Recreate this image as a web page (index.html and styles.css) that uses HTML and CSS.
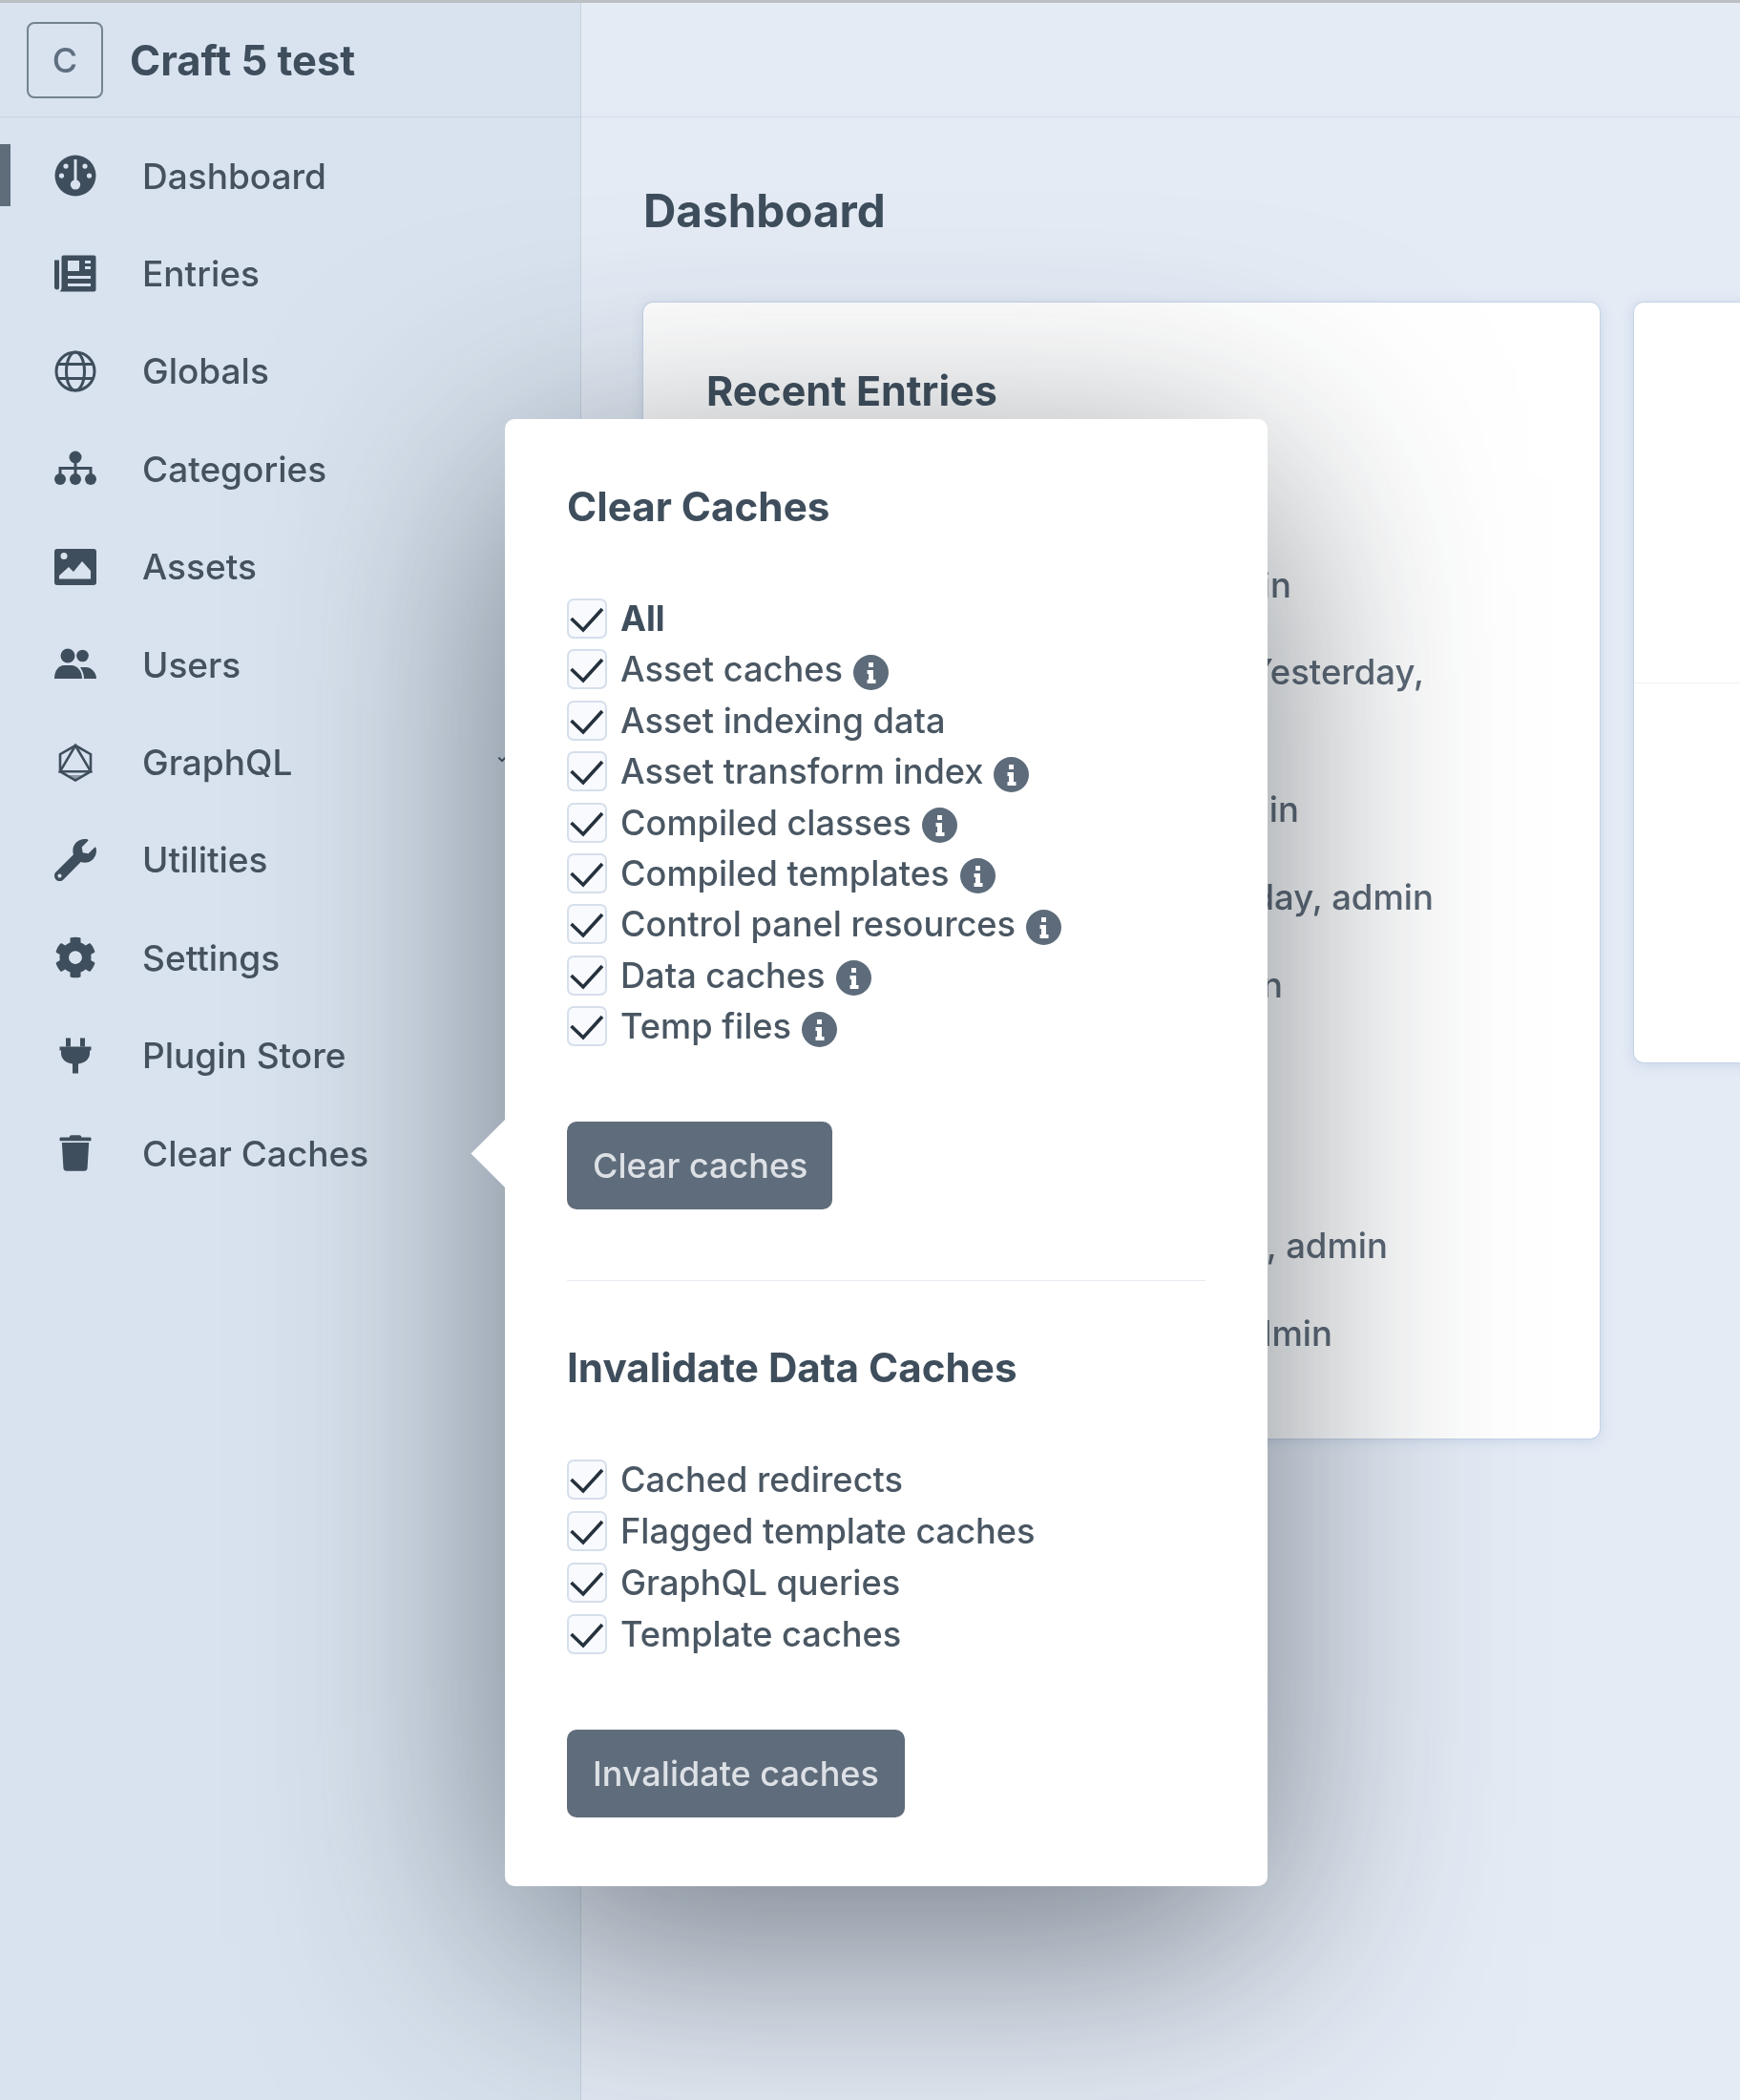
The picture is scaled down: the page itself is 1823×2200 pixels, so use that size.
FILE: index.html
```html
<!DOCTYPE html>
<html lang="en">
<head>
<meta charset="utf-8">
<title>Dashboard - Craft 5 test</title>
<link rel="stylesheet" href="styles.css">
</head>
<body>
<div class="app">
  <aside class="sidebar">
    <div class="site">
      <span class="logo">C</span>
      <span class="site-name">Craft 5 test</span>
    </div>
    <nav class="nav">
      <a class="nav-item active"><svg class="icon" viewBox="0 0 44 44"><path fill-rule="evenodd" d="M22 .5a21.5 21.5 0 1 0 0 43a21.5 21.5 0 1 0 0-43zM20.5 5h3v21.4a5.2 5.2 0 1 1-3 0zM12 9.5a2.6 2.6 0 1 1 0 5.2a2.6 2.6 0 1 1 0-5.2zM32 9.5a2.6 2.6 0 1 1 0 5.2a2.6 2.6 0 1 1 0-5.2zM7.5 19.5a2.6 2.6 0 1 1 0 5.2a2.6 2.6 0 1 1 0-5.2zM36.5 19.5a2.6 2.6 0 1 1 0 5.2a2.6 2.6 0 1 1 0-5.2z"/></svg><span>Dashboard</span></a>
      <a class="nav-item"><svg class="icon" viewBox="0 0 44 44"><path fill-rule="evenodd" d="M9.5 2.5h32a2 2 0 0 1 2 2v34a2 2 0 0 1-2 2H5.5a5 5 0 0 0 2-4V4.500a2 2 0 0 1 2-2zM14 8v11h12V8zM32 8v3h6V8zM32 14v3h6v-3zM14 24v3h24v-3zM14 32v3h24v-3z"/><path d="M0 7.500h5v29a2 2 0 0 1-2 2a3 3 0 0 1-3-3z"/></svg><span>Entries</span></a>
      <a class="nav-item"><svg class="icon stroke" viewBox="0 0 44 44"><circle cx="22" cy="22" r="20"/><ellipse cx="22" cy="22" rx="9.500" ry="20"/><path d="M4 14.500h36M4 29.500h36"/></svg><span>Globals</span></a>
      <a class="nav-item"><svg class="icon" viewBox="0 0 44 44"><circle cx="22" cy="10" r="6.500"/><circle cx="6" cy="33" r="6"/><circle cx="22" cy="33" r="6"/><circle cx="38" cy="33" r="6"/><path d="M20.500 12h3v8h16v9h-3v-6h-13v6h-3v-6h-13v6h-3v-9h16z"/></svg><span>Categories</span></a>
      <a class="nav-item"><svg class="icon" viewBox="0 0 44 44"><path fill-rule="evenodd" d="M3 3h38a3 3 0 0 1 3 3v32a3 3 0 0 1-3 3H3a3 3 0 0 1-3-3V6a3 3 0 0 1 3-3zM10 7a3.500 3.500 0 1 0 0 7a3.500 3.500 0 1 0 0-7zM5 34.500h33V26l-9-10-9 11-5-5-10 9z"/></svg><span>Assets</span></a>
      <a class="nav-item"><svg class="icon" viewBox="0 0 44 44"><circle cx="14" cy="13" r="7.500"/><circle cx="29.500" cy="13" r="6.300"/><path d="M0 37c0-9 5-14 10-14h8c5 0 11 5 11 14z"/><path d="M31 37c0-5-2-9-4-12h6c6 0 11 6 11 12z"/></svg><span>Users</span></a>
      <a class="nav-item"><svg class="icon gql" viewBox="0 0 44 44"><path d="M22 4l16 9.200v18L22 40.500 6 31.200v-18z"/><path d="M22 4l16 27.200H6z"/><path class="gql-base" d="M14 35h16l-8 5z"/></svg><span>GraphQL</span><svg class="chevron" viewBox="0 0 8 10"><path d="M1 3l3 3 3-3"/></svg></a>
      <a class="nav-item"><svg class="icon" viewBox="0 0 512 512"><path d="M507.730 109.100c-2.240-9.030-13.540-12.090-20.120-5.510l-74.360 74.360-67.880-11.310-11.310-67.880 74.360-74.360c6.620-6.620 3.430-17.900-5.660-20.160-47.380-11.740-99.550.91-136.580 37.930-39.640 39.640-50.550 97.100-34.050 147.200L18.740 402.760c-24.990 24.990-24.990 65.510 0 90.500 24.990 24.990 65.510 24.990 90.500 0l213.210-213.210c50.120 16.710 107.470 5.680 147.370-34.220 37.070-37.070 49.700-89.320 37.910-136.730zM64 472c-13.250 0-24-10.750-24-24 0-13.260 10.750-24 24-24s24 10.740 24 24c0 13.250-10.750 24-24 24z"/></svg><span>Utilities</span></a>
      <a class="nav-item"><svg class="icon" viewBox="0 0 512 512"><path d="M487.400 315.700l-42.600-24.600c4.300-23.200 4.300-47 0-70.200l42.600-24.600c4.900-2.800 7.100-8.600 5.500-14-11.100-35.600-30-67.800-54.700-94.600-3.800-4.100-10-5.100-14.800-2.300L380.800 110c-17.900-15.400-38.500-27.300-60.800-35.100V25.800c0-5.600-3.900-10.500-9.400-11.700-36.700-8.200-74.300-7.800-109.200 0-5.500 1.200-9.400 6.100-9.400 11.700V75c-22.200 7.900-42.800 19.800-60.800 35.100L88.700 85.500c-4.900-2.800-11-1.900-14.800 2.300-24.700 26.700-43.600 58.900-54.700 94.600-1.700 5.400.6 11.200 5.500 14L67.300 221c-4.300 23.200-4.300 47 0 70.200l-42.600 24.600c-4.900 2.800-7.100 8.600-5.500 14 11.100 35.600 30 67.800 54.700 94.600 3.800 4.100 10 5.100 14.800 2.300l42.600-24.600c17.900 15.400 38.500 27.300 60.800 35.100v49.200c0 5.600 3.900 10.500 9.400 11.700 36.700 8.200 74.300 7.800 109.200 0 5.500-1.200 9.400-6.100 9.400-11.700v-49.200c22.200-7.900 42.800-19.800 60.800-35.100l42.600 24.600c4.900 2.800 11 1.900 14.800-2.300 24.700-26.700 43.600-58.900 54.700-94.600 1.500-5.500-.7-11.300-5.600-14.100zM256 336c-44.100 0-80-35.900-80-80s35.900-80 80-80 80 35.900 80 80-35.900 80-80 80z"/></svg><span>Settings</span></a>
      <a class="nav-item"><svg class="icon" viewBox="0 0 44 44"><path d="M12 3.500h5v9h-5zM27 3.500h5v9h-5z"/><path d="M5.500 12.500h33v4H37v3c0 6-5 10-12 11v10h-6V30.500c-7-1-12-5-12-11v-3H5.500z"/></svg><span>Plugin Store</span></a>
      <a class="nav-item"><svg class="icon" viewBox="-74.500 -42.500 597 597"><path d="M432 32H312l-9.400-18.700A24 24 0 0 0 281.100 0H166.800a23.720 23.720 0 0 0-21.400 13.300L136 32H16A16 16 0 0 0 0 48v20a16 16 0 0 0 16 16h416a16 16 0 0 0 16-16V48a16 16 0 0 0-16-16zM53.200 467a48 48 0 0 0 47.900 45h245.800a48 48 0 0 0 47.900-45L416 108H32z"/></svg><span>Clear Caches</span></a>
    </nav>
  </aside>
  <main class="main">
    <div class="topbar"></div>
    <div class="content">
      <h1 class="page-title">Dashboard</h1>
      <div class="cards">
        <section class="card card-entries">
          <h2 class="card-title">Recent Entries</h2>
          <p class="meta m1">admin</p>
          <p class="meta m2">Yesterday,</p>
          <p class="meta m3">admin</p>
          <p class="meta m4">Yesterday, admin</p>
          <p class="meta m5">admin</p>
          <p class="meta m6">Yesterday, admin</p>
          <p class="meta m7">admin</p>
        </section>
        <section class="card card-side">
          <div class="card-side-top"></div>
        </section>
      </div>
    </div>
  </main>
  <div class="popup">
    <span class="tip"></span>
    <h2 class="popup-title">Clear Caches</h2>
    <ul class="checks">
      <li class="check strong"><span class="box"><svg viewBox="0 0 42 42"><path d="M4.500 21L17 33 37 11"/></svg></span><span>All</span></li>
      <li class="check"><span class="box"><svg viewBox="0 0 42 42"><path d="M4.500 21L17 33 37 11"/></svg></span><span>Asset caches</span><svg class="info" viewBox="0 0 37 37"><path fill-rule="evenodd" d="M18.500 0a18.500 18.500 0 1 0 0 37a18.500 18.500 0 1 0 0-37zM16 8h5v5h-5zM14.500 16H21v10h2.500v4h-9v-4H16v-6h-1.500z"/></svg></li>
      <li class="check"><span class="box"><svg viewBox="0 0 42 42"><path d="M4.500 21L17 33 37 11"/></svg></span><span>Asset indexing data</span></li>
      <li class="check"><span class="box"><svg viewBox="0 0 42 42"><path d="M4.500 21L17 33 37 11"/></svg></span><span>Asset transform index</span><svg class="info" viewBox="0 0 37 37"><path fill-rule="evenodd" d="M18.500 0a18.500 18.500 0 1 0 0 37a18.500 18.500 0 1 0 0-37zM16 8h5v5h-5zM14.500 16H21v10h2.500v4h-9v-4H16v-6h-1.500z"/></svg></li>
      <li class="check"><span class="box"><svg viewBox="0 0 42 42"><path d="M4.500 21L17 33 37 11"/></svg></span><span>Compiled classes</span><svg class="info" viewBox="0 0 37 37"><path fill-rule="evenodd" d="M18.500 0a18.500 18.500 0 1 0 0 37a18.500 18.500 0 1 0 0-37zM16 8h5v5h-5zM14.500 16H21v10h2.500v4h-9v-4H16v-6h-1.500z"/></svg></li>
      <li class="check"><span class="box"><svg viewBox="0 0 42 42"><path d="M4.500 21L17 33 37 11"/></svg></span><span>Compiled templates</span><svg class="info" viewBox="0 0 37 37"><path fill-rule="evenodd" d="M18.500 0a18.500 18.500 0 1 0 0 37a18.500 18.500 0 1 0 0-37zM16 8h5v5h-5zM14.500 16H21v10h2.500v4h-9v-4H16v-6h-1.500z"/></svg></li>
      <li class="check"><span class="box"><svg viewBox="0 0 42 42"><path d="M4.500 21L17 33 37 11"/></svg></span><span>Control panel resources</span><svg class="info" viewBox="0 0 37 37"><path fill-rule="evenodd" d="M18.500 0a18.500 18.500 0 1 0 0 37a18.500 18.500 0 1 0 0-37zM16 8h5v5h-5zM14.500 16H21v10h2.500v4h-9v-4H16v-6h-1.500z"/></svg></li>
      <li class="check"><span class="box"><svg viewBox="0 0 42 42"><path d="M4.500 21L17 33 37 11"/></svg></span><span>Data caches</span><svg class="info" viewBox="0 0 37 37"><path fill-rule="evenodd" d="M18.500 0a18.500 18.500 0 1 0 0 37a18.500 18.500 0 1 0 0-37zM16 8h5v5h-5zM14.500 16H21v10h2.500v4h-9v-4H16v-6h-1.500z"/></svg></li>
      <li class="check"><span class="box"><svg viewBox="0 0 42 42"><path d="M4.500 21L17 33 37 11"/></svg></span><span>Temp files</span><svg class="info" viewBox="0 0 37 37"><path fill-rule="evenodd" d="M18.500 0a18.500 18.500 0 1 0 0 37a18.500 18.500 0 1 0 0-37zM16 8h5v5h-5zM14.500 16H21v10h2.500v4h-9v-4H16v-6h-1.500z"/></svg></li>
    </ul>
    <button class="btn btn-clear">Clear caches</button>
    <hr class="divider">
    <h2 class="popup-title">Invalidate Data Caches</h2>
    <ul class="checks checks-wide">
      <li class="check"><span class="box"><svg viewBox="0 0 42 42"><path d="M4.500 21L17 33 37 11"/></svg></span><span>Cached redirects</span></li>
      <li class="check"><span class="box"><svg viewBox="0 0 42 42"><path d="M4.500 21L17 33 37 11"/></svg></span><span>Flagged template caches</span></li>
      <li class="check"><span class="box"><svg viewBox="0 0 42 42"><path d="M4.500 21L17 33 37 11"/></svg></span><span>GraphQL queries</span></li>
      <li class="check"><span class="box"><svg viewBox="0 0 42 42"><path d="M4.500 21L17 33 37 11"/></svg></span><span>Template caches</span></li>
    </ul>
    <button class="btn">Invalidate caches</button>
  </div>
</div>
</body>
</html>
```
FILE: styles.css
```css
* { box-sizing: border-box; }
html, body { margin: 0; padding: 0; }
body {
  width: 1823px;
  height: 2200px;
  overflow: hidden;
  background: #e4ebf5;
  font-family: Inter, "Noto Sans", "Liberation Sans", sans-serif;
  color: #46535f;
}
.app {
  position: relative;
  display: flex;
  height: 2200px;
  border-top: 3px solid #bcbfc3;
  overflow: hidden;
  filter: blur(.5px);
}
.sidebar {
  flex: 0 0 609px;
  background: #d9e3ef;
  border-right: 1px solid #c8d2df;
}
.site {
  display: flex;
  align-items: center;
  gap: 28px;
  height: 120px;
  padding-left: 28px;
  border-bottom: 1px solid #c9d3e0;
}
.logo {
  display: flex;
  align-items: center;
  justify-content: center;
  width: 80px;
  height: 80px;
  border: 2px solid #73838f;
  border-radius: 8px;
  font-size: 36px;
  font-weight: 500;
  color: #5e6f80;
}
.site-name {
  font-size: 43.500px;
  font-weight: 700;
  color: #3f4e5c;
}
.nav { padding-top: 10px; }
.nav-item {
  position: relative;
  display: flex;
  align-items: center;
  gap: 48px;
  height: 102.4px;
  padding-left: 57px;
  font-size: 37px;
  font-weight: 450;
  color: #46535f;
}
.nav-item.active::before {
  content: "";
  position: absolute;
  left: 0;
  top: 18px;
  width: 11px;
  height: 65px;
  background: #5f6d7b;
}
.icon { flex: 0 0 44px; width: 44px; height: 44px; fill: #3f4e5c; }
.icon.stroke { fill: none; stroke: #3f4e5c; stroke-width: 3; }
.icon.gql { fill: none; stroke: #3f4e5c; stroke-width: 2.6; }
.gql-base { fill: #3f4e5c; stroke: none; opacity: .5; }
.chevron {
  position: absolute;
  left: 521px;
  top: 43px;
  width: 10px;
  height: 12px;
  fill: none;
  stroke: #3f4e5c;
  stroke-width: 1.6;
}
.main { flex: 1; min-width: 0; }
.topbar { height: 120px; border-bottom: 1px solid #d3dce9; }
.content { padding: 70px 0 0 65px; }
.page-title {
  margin: 0;
  height: 56px;
  line-height: 56px;
  font-size: 47.600px;
  font-weight: 700;
  color: #3f4e5c;
}
.cards {
  display: flex;
  align-items: flex-start;
  gap: 36px;
  margin-top: 68px;
  width: 1400px;
}
.card {
  background: #fff;
  border-radius: 10px;
  box-shadow: 0 0 0 1px rgba(170, 188, 215, .35), 0 2px 14px rgba(140, 165, 205, .35);
}
.card-entries {
  flex: 0 0 1002px;
  height: 1190px;
  padding: 69px 0 0 66px;
}
.card-title {
  margin: 0;
  height: 46px;
  line-height: 46px;
  font-size: 43px;
  font-weight: 700;
  color: #3f4e5c;
}
.meta {
  margin: 0;
  height: 46px;
  line-height: 46px;
  font-size: 36.500px;
  font-weight: 450;
  color: #5b6774;
  text-align: right;
}
.m1 { margin-top: 158px; margin-right: 323px; }
.m2 { margin-top: 45px; margin-right: 184px; }
.m3 { margin-top: 98px; margin-right: 315px; }
.m4 { margin-top: 46px; margin-right: 174px; }
.m5 { margin-top: 46px; margin-right: 332px; }
.m6 { margin-top: 227px; margin-right: 222px; }
.m7 { margin-top: 46px; margin-right: 280px; }
.card-side { flex: 0 0 364px; height: 796px; }
.card-side-top { height: 399px; border-bottom: 1px solid #eef1f6; }
.popup {
  position: absolute;
  left: 529px;
  top: 436px;
  width: 799px;
  height: 1537px;
  padding: 69px 65px 0 65px;
  background: #fff;
  border-radius: 10px;
  box-shadow: 0 60px 250px rgba(31, 41, 51, .58);
}
.tip {
  position: absolute;
  left: -25px;
  top: 744px;
  width: 51px;
  height: 51px;
  background: #fff;
  transform: rotate(45deg);
}
.popup-title {
  margin: 0;
  height: 46px;
  line-height: 46px;
  font-size: 42.200px;
  font-weight: 700;
  color: #3f4e5c;
}
.checks {
  display: flex;
  flex-direction: column;
  gap: 11.4px;
  margin: 73px 0 79px;
  padding: 0;
  list-style: none;
}
.checks-wide { gap: 12px; }
.check {
  display: flex;
  align-items: center;
  height: 42px;
  font-size: 36.200px;
  font-weight: 450;
  color: #4a5763;
  white-space: nowrap;
}
.check.strong { font-weight: 700; color: #3f4e5c; }
.box {
  flex: 0 0 42px;
  width: 42px;
  height: 42px;
  margin-right: 14px;
  border-radius: 7px;
  background: #f8fafe;
  box-shadow: inset 0 0 0 2px #d6dfeb;
}
.box svg {
  display: block;
  width: 42px;
  height: 42px;
  fill: none;
  stroke: #25313d;
  stroke-width: 3.6;
}
.info {
  flex: 0 0 37px;
  width: 37px;
  height: 37px;
  margin: 6px 0 0 11px;
  fill: #5d6b7a;
}
.btn {
  display: block;
  height: 92px;
  padding: 0 27px;
  border: 0;
  border-radius: 10px;
  background: #5f6c7b;
  font: inherit;
  font-size: 36px;
  font-weight: 450;
  color: #dde1e6;
  white-space: nowrap;
}
.btn-clear { width: 278px; }
.divider {
  height: 1px;
  margin: 74px 0 68px;
  border: 0;
  background: #e7ebf1;
}
```
